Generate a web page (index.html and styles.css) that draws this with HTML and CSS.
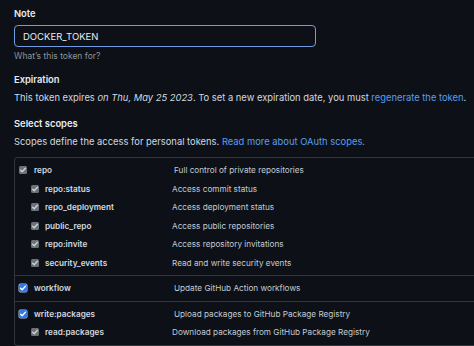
FILE: index.html
```html
<!DOCTYPE html>
<html lang="en">
<head>
<meta charset="utf-8">
<title>New personal access token</title>
<link rel="stylesheet" href="styles.css">
</head>
<body>
<main class="page">
  <label class="heading note-label" for="note">Note</label>
  <div class="input">DOCKER_TOKEN</div>
  <p class="hint">What’s this token for?</p>

  <h3 class="heading exp-heading">Expiration</h3>
  <p class="text">This token expires <em>on Thu, May 25 2023</em>. To set a new expiration date, you must <a class="link" href="#">regenerate the token</a>.</p>

  <h3 class="heading scopes-heading">Select scopes</h3>
  <p class="text scopes-text">Scopes define the access for personal tokens. <a class="link" href="#">Read more about OAuth scopes.</a></p>

  <div class="scopes">
    <div class="group">
      <div class="row parent">
        <div class="name"><span class="cb grey"><svg viewBox="0 0 8 8"><path d="M1.6 4.2 L3.2 5.8 L6.4 2.2"/></svg></span><span class="label">repo</span></div>
        <div class="desc">Full control of private repositories</div>
      </div>
      <div class="row child">
        <div class="name"><span class="cb grey"><svg viewBox="0 0 8 8"><path d="M1.6 4.2 L3.2 5.8 L6.4 2.2"/></svg></span><span class="label">repo:status</span></div>
        <div class="desc">Access commit status</div>
      </div>
      <div class="row child">
        <div class="name"><span class="cb grey"><svg viewBox="0 0 8 8"><path d="M1.6 4.2 L3.2 5.8 L6.4 2.2"/></svg></span><span class="label">repo_deployment</span></div>
        <div class="desc">Access deployment status</div>
      </div>
      <div class="row child">
        <div class="name"><span class="cb grey"><svg viewBox="0 0 8 8"><path d="M1.6 4.2 L3.2 5.8 L6.4 2.2"/></svg></span><span class="label">public_repo</span></div>
        <div class="desc">Access public repositories</div>
      </div>
      <div class="row child">
        <div class="name"><span class="cb grey"><svg viewBox="0 0 8 8"><path d="M1.6 4.2 L3.2 5.8 L6.4 2.2"/></svg></span><span class="label">repo:invite</span></div>
        <div class="desc">Access repository invitations</div>
      </div>
      <div class="row child">
        <div class="name"><span class="cb grey"><svg viewBox="0 0 8 8"><path d="M1.6 4.2 L3.2 5.8 L6.4 2.2"/></svg></span><span class="label">security_events</span></div>
        <div class="desc">Read and write security events</div>
      </div>
    </div>
    <div class="group">
      <div class="row parent">
        <div class="name"><span class="cb blue"><svg viewBox="0 0 8 8"><path d="M1.6 4.2 L3.2 5.8 L6.4 2.2"/></svg></span><span class="label">workflow</span></div>
        <div class="desc">Update GitHub Action workflows</div>
      </div>
    </div>
    <div class="group">
      <div class="row parent">
        <div class="name"><span class="cb blue"><svg viewBox="0 0 8 8"><path d="M1.6 4.2 L3.2 5.8 L6.4 2.2"/></svg></span><span class="label">write:packages</span></div>
        <div class="desc">Upload packages to GitHub Package Registry</div>
      </div>
      <div class="row child">
        <div class="name"><span class="cb grey"><svg viewBox="0 0 8 8"><path d="M1.6 4.2 L3.2 5.8 L6.4 2.2"/></svg></span><span class="label">read:packages</span></div>
        <div class="desc">Download packages from GitHub Package Registry</div>
      </div>
    </div>
  </div>
</main>
</body>
</html>
```

FILE: styles.css
```css
html, body {
  margin: 0;
  padding: 0;
  background: #0d1117;
  overflow: hidden;
}
body {
  font-family: Inter, "Liberation Sans", sans-serif;
  font-size: 9.4px;
  color: #c9d1d9;
}
.page {
  padding: 7px 0 0 14px;
}
.heading {
  display: block;
  margin: 0;
  font-size: 9.4px;
  line-height: 14px;
  font-weight: 600;
  color: #e6edf3;
}
.input {
  margin-top: 4px;
  width: 302px;
  height: 22px;
  box-sizing: border-box;
  border: 1.5px solid #6f9be0;
  border-radius: 4px;
  padding-left: 8px;
  display: flex;
  align-items: center;
  font-size: 9.5px;
  color: #e6edf3;
}
.hint {
  margin: 3px 0 0;
  font-size: 8.5px;
  line-height: 12px;
  color: #8b949e;
}
.exp-heading {
  margin-top: 10.5px;
}
.text {
  margin: 4.7px 0 0;
  line-height: 14px;
  color: #d2d9e0;
  white-space: nowrap;
}
.text em {
  font-style: italic;
}
.link {
  color: #5a9df0;
  text-decoration: none;
}
.scopes-heading {
  margin-top: 12px;
}
.scopes-text {
  margin-top: 4px;
}
.scopes {
  margin-top: 8px;
  border: 1px solid #30363d;
  border-right: none;
  border-radius: 4px 0 0 4px;
  font-size: 8.2px;
}
.group {
  padding: 3px 0;
}
.group + .group {
  border-top: 1px solid #30363d;
}
.row {
  display: flex;
  align-items: center;
  height: 18.5px;
}
.name {
  display: flex;
  align-items: center;
  box-sizing: border-box;
}
.parent .name {
  width: 159px;
  padding-left: 4px;
  gap: 7px;
}
.child .name {
  width: 157px;
  padding-left: 16px;
  gap: 6px;
}
.label {
  font-weight: 600;
  color: #d2d9e0;
}
.desc {
  color: #c2cad2;
}
.cb {
  width: 8px;
  height: 8px;
  border-radius: 1.5px;
  display: inline-flex;
  flex: none;
}
.cb svg {
  width: 8px;
  height: 8px;
}
.cb path {
  fill: none;
  stroke-width: 1.3;
  stroke-linecap: round;
  stroke-linejoin: round;
}
.cb.grey {
  background: #6c7077;
}
.cb.grey path {
  stroke: #d0d3d7;
}
.cb.blue {
  background: #3478e6;
  box-shadow: 0 0 0 0.5px #a9c4f0;
}
.cb.blue path {
  stroke: #ffffff;
}
```
